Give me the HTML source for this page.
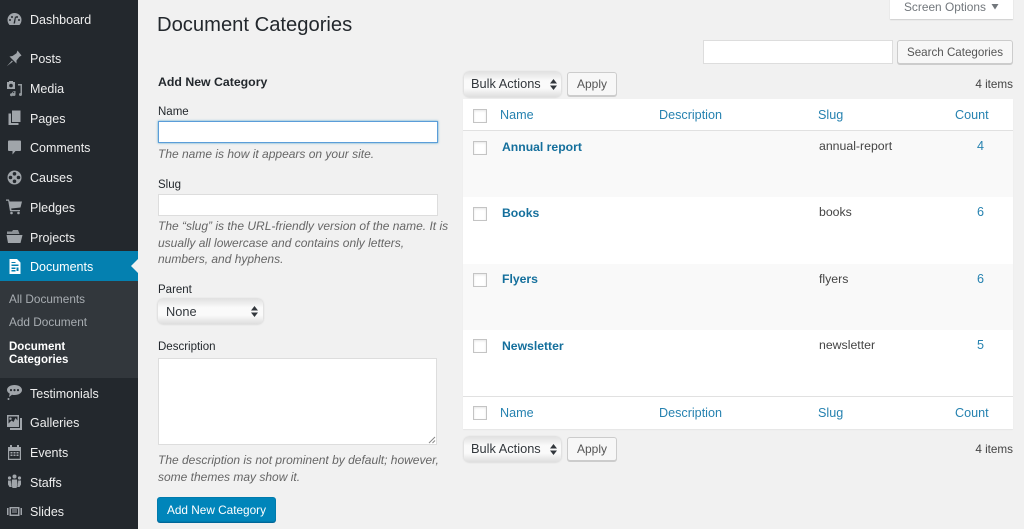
<!DOCTYPE html>
<html><head><meta charset="utf-8"><title>Document Categories</title>
<style>
html,body{margin:0;padding:0;width:1024px;height:529px;overflow:hidden;background:#f1f1f1;font-family:"Liberation Sans",sans-serif;color:#444}
#p{position:relative;width:1024px;height:529px;overflow:hidden;filter:blur(.25px)}
.a{position:absolute;white-space:nowrap}
.m{left:30px;color:#eee;font-size:12.5px;line-height:18px}
.s{left:9px;color:#a8adb2;font-size:11.8px;line-height:16px}
svg.i{position:absolute;left:6px;width:17px;height:17px;fill:#a0a5aa}
.l{left:158px;font-size:11.5px;line-height:16px;color:#23282d}
.h{left:158px;font-size:12px;line-height:17px;font-style:italic;color:#666}
.in{position:absolute;background:#fff;border:1px solid #ddd;box-sizing:border-box}
.sel{position:absolute;box-sizing:border-box;height:25px;border-radius:5px;background:linear-gradient(#e2e2e2,#fafafa 35%,#fafafa 65%,#dedede);box-shadow:0 0 2px #c4c4c4;font-size:12.8px;line-height:24px;color:#32373c;padding-left:7px}
.sel svg{position:absolute;top:7px;width:7px;height:11px;fill:#32373c}
.btn{position:absolute;box-sizing:border-box;background:#f7f7f7;border:1px solid #ccc;border-radius:3px;box-shadow:0 1px 0 #ccc;font-size:12px;color:#555;text-align:center}
.lnk{color:#2682b0;font-size:12.6px;line-height:16px}
.b{color:#146f9c;font-weight:bold;font-size:12.2px;line-height:16px}
.c{position:absolute;left:473px;width:14px;height:14px;box-sizing:border-box;background:#fff;border:1px solid #c4c4c4;box-shadow:inset 0 1px 2px rgba(0,0,0,.1)}
.t{font-size:12.3px;line-height:16px;color:#444}
</style></head><body><div id="p">

<div class="a" style="left:0;top:0;width:138px;height:529px;background:#23282d"></div>
<div class="a" style="left:0;top:251px;width:138px;height:30px;background:#0480b0"></div>
<div class="a" style="left:0;top:281px;width:138px;height:97px;background:#32373c"></div>
<svg class="a" style="left:131px;top:259px" width="7" height="14"><path d="M7 0V14L0 7Z" fill="#f1f1f1"/></svg>

<svg class="i" style="top:11px" viewBox="0 0 17 17"><path d="M8.500 2a7 7 0 0 0-7 7c0 2 .8 3.600 2 5h10c1.200-1.400 2-3 2-5a7 7 0 0 0-7-7zM4 10a1 1 0 1 1 0-2 1 1 0 0 1 0 2zm2-3a1 1 0 1 1 0-2 1 1 0 0 1 0 2zm3 5.500H7.500L9 5.500l1 .3zM11 7a1 1 0 1 1 0-2 1 1 0 0 1 0 2zm2 3a1 1 0 1 1 0-2 1 1 0 0 1 0 2z" fill-rule="evenodd"/></svg>
<svg class="i" style="top:50px" viewBox="0 0 17 17"><path d="M15.500 5.500 11.500.5l-1 2.800L6.500 6 3.500 6.500l7 7v-3l3-3.700zM6 10.500 .8 16.200l6-4.600z"/></svg>
<svg class="i" style="top:80px" viewBox="0 0 17 17"><path d="M1 2h2V1h4v1h2v7H1zm4 1.800a1.800 1.800 0 1 0 0 3.600 1.800 1.800 0 0 0 0-3.600z" fill-rule="evenodd"/><path d="M12 4h4v10.500a1.500 1.500 0 1 1-1.500-1.500V5.500H12zM7 11.500l2.500-.5v3.500a1.500 1.500 0 1 1-1.300-1.500v-1l-1.200.3v2.500a1.500 1.500 0 1 1-1.300-1.500z" opacity=".9"/></svg>
<svg class="i" style="top:109px" viewBox="0 0 17 17"><path d="M6 1.500h8.500V13H6z"/><path d="M2.500 4.500H5v9.500h7.500V16h-10z"/></svg>
<svg class="i" style="top:139px" viewBox="0 0 17 17"><path d="M3 1.500h11a1 1 0 0 1 1 1v8.500a1 1 0 0 1-1 1H9.500l-3 3.500V12H3a1 1 0 0 1-1-1V2.500a1 1 0 0 1 1-1z"/></svg>
<svg class="i" style="top:169px" viewBox="0 0 17 17"><path d="M8.500 1.500a7 7 0 1 0 0 14 7 7 0 0 0 0-14zM8.500 3a1.800 1.800 0 1 1 0 3.600 1.800 1.800 0 0 1 0-3.600zM4.500 6.700a1.800 1.800 0 1 1 0 3.600 1.800 1.800 0 0 1 0-3.600zm8 0a1.800 1.800 0 1 1 0 3.600 1.800 1.800 0 0 1 0-3.600zM8.500 10.500a1.800 1.800 0 1 1 0 3.600 1.800 1.800 0 0 1 0-3.600z" fill-rule="evenodd"/></svg>
<svg class="i" style="top:198px" viewBox="0 0 17 17"><path d="M0 1.500h3l.6 2H16l-1.500 6-9.300 1 .3 1.500H14v1.200H4L2.200 2.800H0z"/><circle cx="5.500" cy="15" r="1.300"/><circle cx="12.500" cy="15" r="1.300"/></svg>
<svg class="i" style="top:228px" viewBox="0 0 17 17"><path d="M1 6V3.500h5L7 2h5l1 2.500 .5 1.500H4z" opacity=".85"/><path d="M.5 7h16l-2 8H2z"/></svg>
<svg class="i" style="top:258px;fill:#fff" viewBox="0 0 17 17"><path d="M3.500 1h7.500l3.500 3.500V16h-11zM5.500 4v1h4V4zm0 2.500V8h7V6.500zm0 3V11h4V9.500zm5 0V13h2V9.500zm-5 2.500v1.500h4V12z" fill-rule="evenodd"/></svg>
<svg class="i" style="top:384px" viewBox="0 0 17 17"><path d="M8.500 1C12.600 1 16 3 16 6s-3.400 5-7.500 5c-.9 0-1.700-.1-2.500-.3L3 13l.7-3.400C2 8.700 1 7.400 1 6c0-3 3.400-5 7.500-5zM5 5a1.100 1.100 0 1 0 0 2.200A1.100 1.100 0 0 0 5 5zm3.500 0a1.100 1.100 0 1 0 0 2.200 1.100 1.100 0 0 0 0-2.200zM12 5a1.100 1.100 0 1 0 0 2.200A1.100 1.100 0 0 0 12 5z" fill-rule="evenodd"/><circle cx="2.500" cy="15" r="1"/></svg>
<svg class="i" style="top:414px" viewBox="0 0 17 17"><path d="M1 1h12v12H1zm1.500 1.500v7l3-3 2 1.500 2-4 2 2.500V2.500zM4.500 3.500a1.200 1.200 0 1 1 0 2.400 1.200 1.200 0 0 1 0-2.400z" fill-rule="evenodd"/><path d="M14 4h2v12H4v-2h10z"/></svg>
<svg class="i" style="top:444px" viewBox="0 0 17 17"><path d="M2 3h2V1h2v2h5V1h2v2h2v13H2zm1.200 4v7.800h10.600V7zM4.500 8h2v1.500h-2zm3 0h2v1.500h-2zm3 0h2v1.500h-2zm-6 2.500h2V12h-2zm3 0h2V12h-2zm3 0h2V12h-2z" fill-rule="evenodd"/></svg>
<svg class="i" style="top:473px" viewBox="0 0 17 17"><circle cx="8.500" cy="3.500" r="2"/><circle cx="3.500" cy="5" r="1.600"/><circle cx="13.500" cy="5" r="1.600"/><path d="M6 6.500h5l.5 5-1 3.500h-4l-1-3.500zM2 7.500h2.800l.3 4.500.8 2H3.500L2 11.500zM15 7.500h-2.800l-.3 4.500-.8 2h2.400l1.500-2.500z"/></svg>
<svg class="i" style="top:503px" viewBox="0 0 17 17"><path d="M3.500 4h10v9h-10zM5 5.500v6h7v-6zM6 6.500h5v1H6zm0 2h5v1H6z" fill-rule="evenodd"/><path d="M1 5h1.500v7H1zM14.500 5H16v7h-1.500z"/></svg>

<div class="a m" style="top:11px">Dashboard</div>
<div class="a m" style="top:50px">Posts</div>
<div class="a m" style="top:80px">Media</div>
<div class="a m" style="top:110px">Pages</div>
<div class="a m" style="top:139px">Comments</div>
<div class="a m" style="top:169px">Causes</div>
<div class="a m" style="top:199px">Pledges</div>
<div class="a m" style="top:229px">Projects</div>
<div class="a m" style="top:258px;color:#fff">Documents</div>
<div class="a s" style="top:291px">All Documents</div>
<div class="a s" style="top:314px">Add Document</div>
<div class="a s" style="top:341px;color:#fff;font-weight:bold;font-size:11.5px;line-height:13px">Document<br>Categories</div>
<div class="a m" style="top:385px">Testimonials</div>
<div class="a m" style="top:414px">Galleries</div>
<div class="a m" style="top:444px">Events</div>
<div class="a m" style="top:474px">Staffs</div>
<div class="a m" style="top:503px">Slides</div>

<div class="a" style="left:890px;top:-6px;width:123px;height:25px;background:#fff;box-shadow:0 1px 1px rgba(0,0,0,.15)"></div>
<div class="a" style="left:904px;top:0;font-size:11.9px;line-height:14px;color:#72777c">Screen Options</div>
<svg class="a" style="left:991px;top:4px" width="8" height="6"><path d="M.5 0H7.500L4 5.500Z" fill="#72777c"/></svg>

<div class="a" style="left:157px;top:12px;font-size:20.2px;line-height:26px;color:#23282d">Document Categories</div>

<div class="in" style="left:703px;top:40px;width:190px;height:24px"></div>
<div class="btn" style="left:897px;top:40px;width:116px;height:24px;line-height:24px;font-size:11.6px">Search Categories</div>
<div class="a t" style="right:11px;top:77px;font-size:11.7px">4 items</div>

<div class="a" style="left:158px;top:74px;font-size:12.3px;line-height:16px;font-weight:bold;color:#23282d">Add New Category</div>
<div class="a l" style="top:104px">Name</div>
<div class="in" style="left:158px;top:121px;width:280px;height:22px;border-color:#5b9dd9;box-shadow:0 0 2px rgba(30,140,190,.8)"></div>
<div class="a h" style="top:146px">The name is how it appears on your site.</div>
<div class="a l" style="top:177px">Slug</div>
<div class="in" style="left:158px;top:194px;width:280px;height:22px"></div>
<div class="a h" style="top:218px">The “slug” is the URL-friendly version of the name. It is</div>
<div class="a h" style="top:235px">usually all lowercase and contains only letters,</div>
<div class="a h" style="top:251px">numbers, and hyphens.</div>
<div class="a l" style="top:282px">Parent</div>
<div class="sel" style="left:158px;top:299px;width:105px;line-height:26px;padding-left:8px">None<svg style="left:93px" viewBox="0 0 7 11"><path d="M3.500 0 7 4.500H0ZM0 6.500H7L3.500 11Z"/></svg></div>
<div class="a l" style="top:339px">Description</div>
<div class="in" style="left:158px;top:358px;width:279px;height:87px"></div>
<svg class="a" style="left:428px;top:436px" width="8" height="8"><path d="M1 7 7 1M4.500 7 7 4.500" stroke="#888" stroke-width="1" fill="none"/></svg>
<div class="a h" style="top:452px">The description is not prominent by default; however,</div>
<div class="a h" style="top:469px">some themes may show it.</div>
<div class="a" style="left:157px;top:497px;width:119px;height:25px;box-sizing:border-box;background:#0085ba;border:1px solid #007bad;border-radius:3px;box-shadow:0 1px 0 #006799;color:#fff;font-size:11.8px;line-height:24px;text-align:center">Add New Category</div>

<div class="sel" style="left:464px;top:72px;width:97px">Bulk Actions<svg style="left:86px" viewBox="0 0 7 11"><path d="M3.500 0 7 4.500H0ZM0 6.500H7L3.500 11Z"/></svg></div>
<div class="btn" style="left:567px;top:72px;width:50px;height:24px;line-height:22px">Apply</div>

<div class="a" style="left:463px;top:99px;width:550px;height:330px;background:#fff;box-shadow:0 1px 1px rgba(0,0,0,.05)"></div>
<div class="a" style="left:463px;top:130px;width:550px;height:1px;background:#e1e1e1"></div>
<div class="a" style="left:463px;top:131px;width:550px;height:66px;background:#f9f9f9"></div>
<div class="a" style="left:463px;top:264px;width:550px;height:66px;background:#f9f9f9"></div>
<div class="a" style="left:463px;top:396px;width:550px;height:1px;background:#e1e1e1"></div>

<div class="c" style="top:109px"></div>
<div class="a lnk" style="left:500px;top:107px">Name</div>
<div class="a lnk" style="left:659px;top:107px">Description</div>
<div class="a lnk" style="left:818px;top:107px">Slug</div>
<div class="a lnk" style="left:955px;top:107px">Count</div>

<div class="c" style="top:141px"></div>
<div class="a b" style="left:502px;top:139px">Annual report</div>
<div class="a t" style="left:819px;top:138px">annual-report</div>
<div class="a lnk" style="left:977px;top:138px">4</div>

<div class="c" style="top:207px"></div>
<div class="a b" style="left:502px;top:205px">Books</div>
<div class="a t" style="left:819px;top:204px">books</div>
<div class="a lnk" style="left:977px;top:204px">6</div>

<div class="c" style="top:273px"></div>
<div class="a b" style="left:502px;top:271px">Flyers</div>
<div class="a t" style="left:819px;top:271px">flyers</div>
<div class="a lnk" style="left:977px;top:271px">6</div>

<div class="c" style="top:339px"></div>
<div class="a b" style="left:502px;top:338px">Newsletter</div>
<div class="a t" style="left:819px;top:337px">newsletter</div>
<div class="a lnk" style="left:977px;top:337px">5</div>

<div class="c" style="top:406px"></div>
<div class="a lnk" style="left:500px;top:405px">Name</div>
<div class="a lnk" style="left:659px;top:405px">Description</div>
<div class="a lnk" style="left:818px;top:405px">Slug</div>
<div class="a lnk" style="left:955px;top:405px">Count</div>

<div class="sel" style="left:464px;top:437px;width:97px">Bulk Actions<svg style="left:86px" viewBox="0 0 7 11"><path d="M3.500 0 7 4.500H0ZM0 6.500H7L3.500 11Z"/></svg></div>
<div class="btn" style="left:567px;top:437px;width:50px;height:24px;line-height:22px">Apply</div>
<div class="a t" style="right:11px;top:442px;font-size:11.7px">4 items</div>

</div></body></html>
